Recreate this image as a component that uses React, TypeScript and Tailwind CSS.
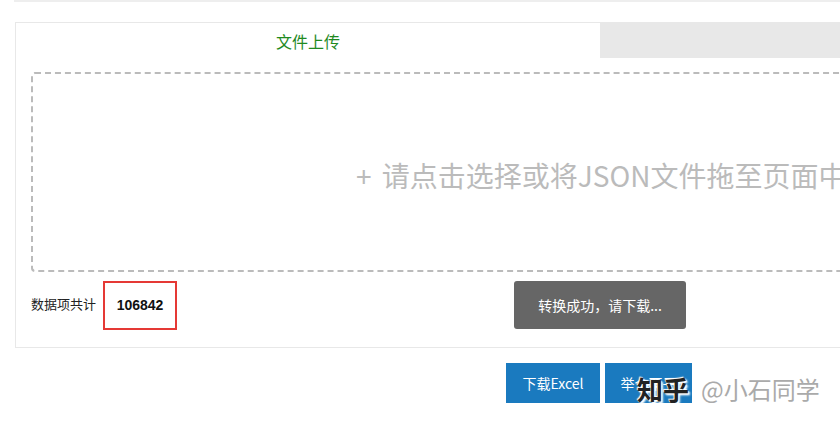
const App = () => {
  return (
    <div className="relative w-[840px] h-[425px] overflow-hidden bg-white font-['Microsoft_YaHei','Noto_Sans_CJK_SC',sans-serif]">
      <div className="ml-[14px] h-[2px] border-t-2 border-[#eeeeee]" />
      <div className="ml-[15px] mt-[20px] w-[840px] border border-[#e8e8e8] border-r-0">
        <div className="flex h-[35px]">
          <div className="w-[584px] flex items-center justify-center text-[16px] text-[#1f8a1f]">文件上传</div>
          <div className="flex-1 bg-[#e8e8e8]" />
        </div>
        <div className="ml-[15px] mt-[14px] h-[200px] border-2 border-dashed border-[#bbbbbb] rounded-[4px] border-r-0 flex items-center pl-[323px] pt-[6px]">
          <span className="whitespace-nowrap text-[28px] text-[#bbbbbb]">+&nbsp;<span className="ml-[4px]">请点击选择或将JSON文件拖至页面中</span></span>
        </div>
        <div className="flex items-start h-[75px] pt-[9px]">
          <span className="ml-[15px] mt-[13px] text-[13px] text-[#222]">数据项共计</span>
          <div className="ml-[7px] w-[74px] h-[49px] border-2 border-[#e53935] flex items-center justify-center text-[14px] font-bold text-[#111] font-['Liberation_Sans',sans-serif]">106842</div>
          <div className="ml-[337px] w-[172px] h-[48px] bg-[#666666] rounded-[3px] flex items-center justify-center text-[14px] text-white">转换成功，请下载...</div>
        </div>
      </div>
      <div className="flex gap-[5px] ml-[506px] mt-[15px]">
        <div className="w-[94px] h-[40px] bg-[#1a7abf] flex items-center justify-center text-[14px] text-white">下载Excel</div>
        <div className="w-[87px] h-[40px] bg-[#1a7abf] flex items-center justify-center text-[14px] text-white">举个栗子</div>
      </div>
      <div className="absolute left-[637px] top-[369px] flex items-center gap-[12px] whitespace-nowrap">
        <span className="text-[26px] font-bold text-[#222] [text-shadow:1px_1px_1px_#fff,-1px_-1px_1px_#fff,2px_2px_2px_#fff]">知乎</span>
        <span className="text-[24px] text-[#aaaaaa] [text-shadow:1px_1px_1px_#fff]">@小石同学</span>
      </div>
    </div>
  );
};

export default App;
